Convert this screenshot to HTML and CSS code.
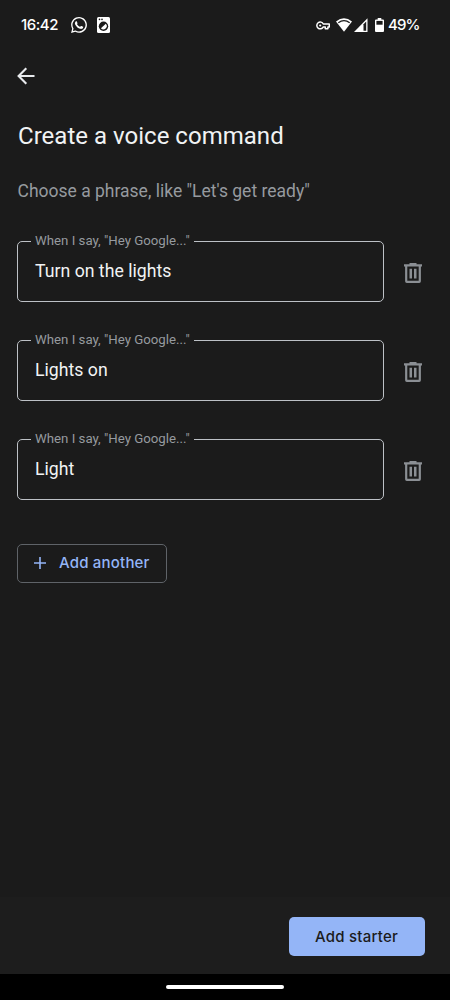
FILE: index.html
```
<!DOCTYPE html>
<html lang="en">
<head>
<meta charset="utf-8">
<title>Create a voice command</title>
<link rel="stylesheet" href="styles.css">
</head>
<body>
<div class="screen">
  <header class="status">
    <span class="clock">16:42</span>
    <svg class="whatsapp" width="16" height="16" viewBox="0 0 24 24" fill="#fff"><path d="M12.04 0C5.5 0 .2 5.3.2 11.8c0 2.1.55 4.1 1.6 5.9L.1 24l6.4-1.7a11.8 11.8 0 0 0 5.5 1.4c6.5 0 11.9-5.3 11.9-11.8S18.6 0 12.04 0zm0 21.7c-1.8 0-3.5-.5-5-1.4l-.4-.2-3.8 1 1-3.7-.2-.4a9.8 9.8 0 1 1 8.4 4.700z"/><path d="M17.5 14.400c-.3-.15-1.8-.9-2.050-1s-.5-.15-.7.15-.8 1-.95 1.150-.35.200-.65.050c-1.600-.8-2.900-1.700-4.100-3.700-.2-.3 0-.5.13-.65.400-.4.700-.9.600-1.200L8.900 7.050c-.25-.6-.5-.5-.7-.5h-.6c-.2 0-.5.100-.8.400-1.200 1.200-1.300 3-.1 4.900 1.700 2.800 3.800 4.800 6.900 5.800 1.500.5 3.900.2 4.500-1.500.4-1.400.2-1.500-.6-1.750z"/></svg>
    <svg class="washer" width="13" height="16" viewBox="0 0 13 16"><rect width="13" height="16" rx="1.500" fill="#fff"/><circle cx="6.500" cy="9.200" r="4.700" fill="#1b1b1b"/><path d="M3.900 11.300 8.800 6.700A3.200 3.200 0 0 1 3.900 11.300z" fill="#fff"/><circle cx="2.500" cy="2.400" r=".8" fill="#1b1b1b"/><circle cx="5" cy="2.400" r=".8" fill="#1b1b1b"/></svg>
    <svg class="key" width="14" height="9" viewBox="0 0 14 9" fill="none" stroke="#fff" stroke-width="1.500"><path d="M7.300 3H13.300V5.900H11.900V7.700H9.300V5.900H7.300A3.400 3.400 0 1 1 7.300 3z" stroke-linejoin="round"/><circle cx="4.200" cy="4.500" r="1.100" fill="#fff" stroke="none"/></svg>
    <svg class="wifi" width="16" height="14" viewBox="0 0 16 14"><path d="M0 3.500Q8-2.900 16 3.500L8 13.800z" fill="#fff"/><path d="M1.900 4.300Q8-.3 14.100 4.300L13.300 5.300Q8 1.400 2.700 5.300z" fill="#1b1b1b"/></svg>
    <svg class="signal" width="14" height="14" viewBox="0 0 14 14"><path d="M0 14 13.500.3V14z" fill="#fff"/><path d="M9.500 6.200 12.200 3.400V12.700H9.500z" fill="#1b1b1b"/></svg>
    <svg class="battery" width="9" height="14" viewBox="0 0 9 14"><path d="M2.700 0h3.600v1.500H8q1 0 1 1V13q0 1-1 1H1q-1 0-1-1V2.500q0-1 1-1h1.700z" fill="#fff"/><path d="M1.400 2.900h6.200V6.700H1.400z" fill="#1b1b1b"/></svg>
    <span class="percent">49%</span>
  </header>
  <nav class="toolbar">
    <svg width="18" height="18" viewBox="0 0 18 18" fill="none" stroke="#e8eaed" stroke-width="2.100"><path d="M17.500 9H1.800M9.300 1.200 1.600 9 9.300 16.800"/></svg>
  </nav>
  <main class="content">
    <h1 class="title">Create a voice command</h1>
    <p class="hint">Choose a phrase, like "Let's get ready"</p>
    <div class="phrases">
      <div class="phrase">
        <div class="field"><span class="label">When I say, "Hey Google..."</span><span class="value">Turn on the lights</span></div>
        <svg class="trash" width="18" height="20" viewBox="0 0 18 20"><path d="M0 1.300H5.500V0h7v1.300H18v2.200H16.900V18.300q0 1.700-1.700 1.700H2.800q-1.700 0-1.700-1.700V3.500H0zM3.300 3.500V17.800H14.700V3.500zM5.500 5.700H8v9.900H5.500zM10 5.700h2.500v9.900H10z" fill="#8b8f94" fill-rule="evenodd"/></svg>
      </div>
      <div class="phrase">
        <div class="field"><span class="label">When I say, "Hey Google..."</span><span class="value">Lights on</span></div>
        <svg class="trash" width="18" height="20" viewBox="0 0 18 20"><path d="M0 1.300H5.500V0h7v1.300H18v2.200H16.900V18.300q0 1.700-1.700 1.700H2.800q-1.700 0-1.700-1.700V3.500H0zM3.300 3.500V17.800H14.700V3.500zM5.500 5.700H8v9.900H5.500zM10 5.700h2.500v9.900H10z" fill="#8b8f94" fill-rule="evenodd"/></svg>
      </div>
      <div class="phrase">
        <div class="field"><span class="label">When I say, "Hey Google..."</span><span class="value">Light</span></div>
        <svg class="trash" width="18" height="20" viewBox="0 0 18 20"><path d="M0 1.300H5.500V0h7v1.300H18v2.200H16.900V18.300q0 1.700-1.700 1.700H2.800q-1.700 0-1.700-1.700V3.500H0zM3.300 3.500V17.800H14.700V3.500zM5.500 5.700H8v9.900H5.500zM10 5.700h2.500v9.900H10z" fill="#8b8f94" fill-rule="evenodd"/></svg>
      </div>
    </div>
    <button class="add"><svg width="12" height="12" viewBox="0 0 12 12" stroke="#94b5f7" stroke-width="1.600"><path d="M6 0v12M0 6h12"/></svg><span>Add another</span></button>
  </main>
  <footer class="actions"><button class="starter">Add starter</button></footer>
  <div class="gesture"><div class="pill"></div></div>
</div>
</body>
</html>
```
FILE: styles.css
```
* { box-sizing: border-box; }
body { margin: 0; background: #1b1b1b; font-family: Roboto, sans-serif; }
.screen { width: 450px; height: 1000px; display: flex; flex-direction: column; background: #1b1b1b; }
.status { height: 50px; display: flex; align-items: center; padding: 0 31px 0 21px; color: #fff; font: 500 15px/20px Inter, sans-serif; }
.status svg { flex: none; }
.clock { width: 50px; letter-spacing: -0.45px; }
.washer { margin-left: 10px; }
.key { margin-left: auto; }
.wifi { margin-left: 6px; }
.signal { margin-left: 2px; }
.battery { margin-left: 7px; }
.percent { margin-left: 4px; width: 31px; white-space: nowrap; letter-spacing: -0.9px; }
.toolbar { height: 51px; padding: 16.500px 17px 0; }
.toolbar svg { display: block; }
.content { flex: 1; padding: 20px 18px 0 17px; }
.title { margin: 0; padding-left: 1px; height: 31px; font-size: 24px; line-height: 31px; font-weight: 400; letter-spacing: 0.02px; color: #f1f3f4; white-space: nowrap; }
.hint { margin: 27px 0 0; padding-left: 0.500px; height: 24px; font-size: 17.5px; line-height: 24px; color: #969a9f; white-space: nowrap; }
.phrases { margin-top: 38px; display: flex; flex-direction: column; gap: 37.8px; }
.phrase { display: flex; align-items: center; gap: 19.500px; height: 61px; }
.field { position: relative; width: 367px; height: 61px; border: 1px solid #bdc1c6; border-radius: 5px; padding: 17px 17px; }
.label { position: absolute; left: 13px; top: -9px; height: 16px; padding: 0 4px; background: #1b1b1b; color: #969a9f; font-size: 13.25px; line-height: 16px; white-space: nowrap; }
.value { display: block; font-size: 17.7px; line-height: 24px; color: #f1f3f4; }
.trash { margin-top: 3px; }
.add { display: flex; align-items: center; gap: 13px; width: 150px; height: 39px; margin-top: 44px; padding: 0 16px; border: 1px solid #5f6368; border-radius: 5px; background: none; color: #94b5f7; font: 500 15px/20px Inter, sans-serif; letter-spacing: 0.2px; white-space: nowrap; }
.actions { height: 77px; padding: 20px 25.500px 0; display: flex; justify-content: flex-end; background: #1d1d1d; }
.starter { width: 136px; height: 39px; padding: 0; border: 0; border-radius: 5px; background: #94b5f7; color: #1b1b1b; font: 500 15px/20px Inter, sans-serif; letter-spacing: 0.22px; }
.gesture { height: 26px; background: #000; display: flex; justify-content: center; padding-top: 11px; }
.pill { width: 118px; height: 4px; border-radius: 2px; background: #fff; }
```
